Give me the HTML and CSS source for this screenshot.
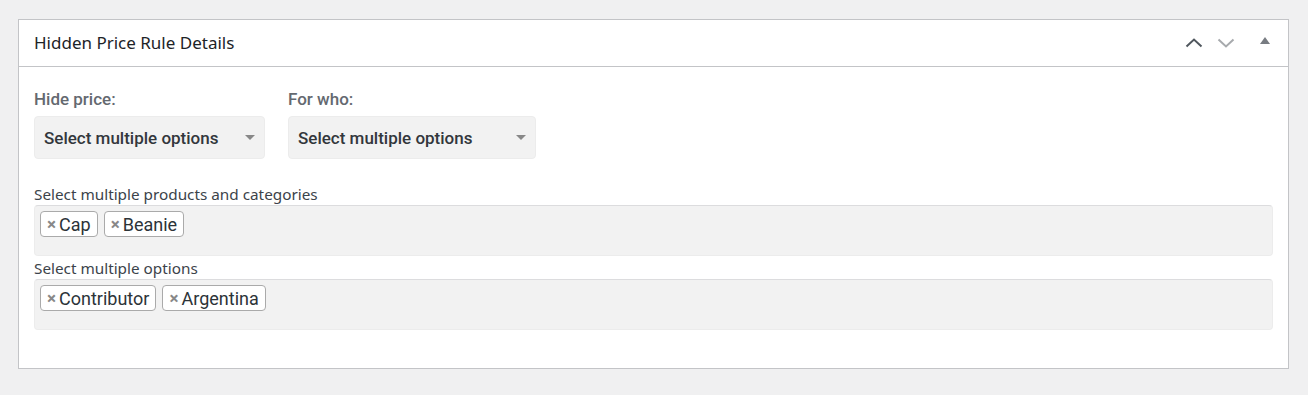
FILE: index.html
```html
<!DOCTYPE html>
<html lang="en">
<head>
<meta charset="utf-8">
<title>Hidden Price Rule Details</title>
<link rel="stylesheet" href="styles.css">
</head>
<body>
<div class="postbox">
  <div class="postbox-header">
    <h2 class="postbox-title">Hidden Price Rule Details</h2>
    <div class="handle-actions">
      <button class="handle-btn" aria-label="Move up">
        <svg width="18" height="10" viewBox="0 0 18 10"><path d="M1.5 8.5 L9 1.5 L16.5 8.5" fill="none" stroke="#50575e" stroke-width="2"/></svg>
      </button>
      <button class="handle-btn" aria-label="Move down">
        <svg width="18" height="10" viewBox="0 0 18 10"><path d="M1.5 1.5 L9 8.5 L16.5 1.5" fill="none" stroke="#a7aaad" stroke-width="2"/></svg>
      </button>
      <button class="handle-btn toggle" aria-label="Toggle panel">
        <svg width="10" height="7" viewBox="0 0 10 7"><path d="M0 7 L5 0 L10 7 Z" fill="#787c82"/></svg>
      </button>
    </div>
  </div>
  <div class="inside">
    <div class="select-row">
      <div class="field">
        <label class="field-label">Hide price:</label>
        <div class="select select-a">
          <span>Select multiple options</span>
          <i class="arrow"></i>
        </div>
      </div>
      <div class="field">
        <label class="field-label">For who:</label>
        <div class="select select-b">
          <span>Select multiple options</span>
          <i class="arrow"></i>
        </div>
      </div>
    </div>
    <div class="multi-field first">
      <label class="multi-label">Select multiple products and categories</label>
      <div class="multi-box">
        <span class="tag"><b class="x">×</b>Cap</span>
        <span class="tag"><b class="x">×</b>Beanie</span>
      </div>
    </div>
    <div class="multi-field">
      <label class="multi-label">Select multiple options</label>
      <div class="multi-box">
        <span class="tag"><b class="x">×</b>Contributor</span>
        <span class="tag"><b class="x">×</b>Argentina</span>
      </div>
    </div>
  </div>
</div>
</body>
</html>
```
FILE: styles.css
```css
html, body {
  margin: 0;
  padding: 0;
}
body {
  background: #f0f0f1;
  padding: 19px 19px 0 18px;
  font-family: "Noto Sans", "Open Sans", sans-serif;
  color: #1d2327;
}
.postbox {
  width: 1269px;
  height: 348px;
  background: #fff;
  border: 1px solid #c3c4c7;
}
.postbox-header {
  height: 46px;
  border-bottom: 1px solid #c3c4c7;
  display: flex;
  align-items: center;
  justify-content: space-between;
}
.postbox-title {
  margin: 0;
  padding-left: 15px;
  font-size: 17px;
  font-weight: 400;
  color: #1d2327;
  line-height: 1.4;
}
.handle-actions {
  display: flex;
  align-items: center;
  padding-right: 0;
}
.handle-btn {
  width: 32px;
  height: 36px;
  border: 0;
  background: none;
  padding: 0;
  display: flex;
  align-items: center;
  justify-content: center;
}
.handle-btn.toggle {
  width: 46px;
  padding-bottom: 5px;
}
.inside {
  padding: 20px 15px 0 15px;
}
.select-row {
  display: flex;
  gap: 23px;
}
.field {
  display: flex;
  flex-direction: column;
}
.field-label {
  font-family: Roboto, "Liberation Sans", sans-serif;
  font-size: 17px;
  font-weight: 500;
  color: #646970;
  line-height: 24px;
  margin-bottom: 5px;
}
.select {
  height: 41px;
  box-sizing: content-box;
  background: #f2f2f2;
  border: 1px solid #ececec;
  border-radius: 4px;
  display: flex;
  align-items: center;
  justify-content: space-between;
  padding: 0 9px 0 9px;
  font-family: Roboto, "Liberation Sans", sans-serif;
  font-size: 17px;
  font-weight: 500;
  color: #32373c;
}
.select-a { width: 211px; }
.select-b { width: 228px; }
.arrow {
  width: 0;
  height: 0;
  border-left: 5px solid transparent;
  border-right: 5px solid transparent;
  border-top: 5px solid #888;
}
.multi-field {
  display: flex;
  flex-direction: column;
  margin-top: 2px;
}
.multi-field.first {
  margin-top: 25px;
}
.multi-label {
  font-size: 15.3px;
  line-height: 20px;
  color: #3c434a;
  margin-bottom: 1px;
}
.multi-box {
  height: 49px;
  box-sizing: content-box;
  background: #f2f2f2;
  border: 1px solid #ececec;
  border-top-color: #dcdcde;
  border-radius: 4px;
  padding: 0 5px;
  display: flex;
  align-items: flex-start;
  gap: 6px;
}
.tag {
  margin-top: 5px;
  height: 24px;
  box-sizing: content-box;
  border: 1px solid #aaa;
  border-radius: 4px;
  background: #fff;
  padding: 0 6px 0 6px;
  display: flex;
  align-items: center;
  font-family: Roboto, "Liberation Sans", sans-serif;
  font-size: 18px;
  font-weight: 400;
  color: #2c3338;
}
.x {
  color: #888;
  font-weight: 700;
  font-size: 17px;
  margin-right: 3px;
}
```
